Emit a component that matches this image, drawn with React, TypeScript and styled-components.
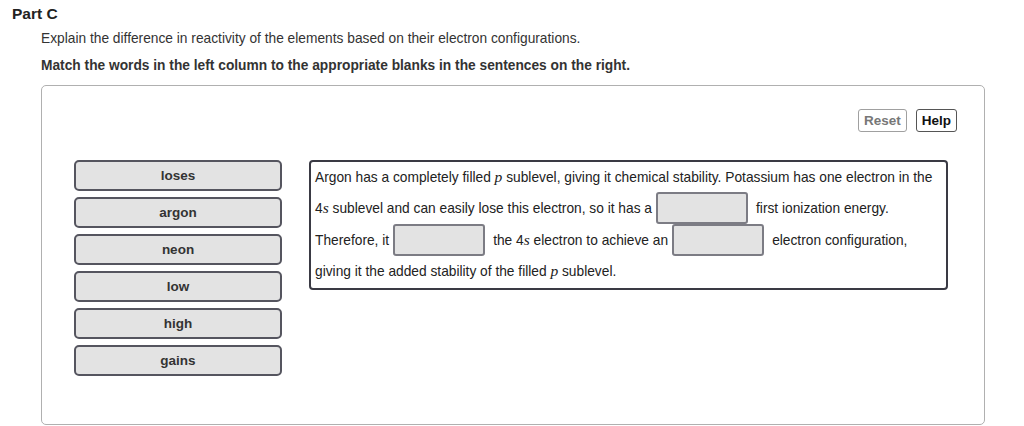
import * as React from "react";
import styled, { createGlobalStyle } from "styled-components";

const GlobalStyle = createGlobalStyle`
    html, body {
        margin: 0;
        padding: 0;
        background: #ffffff;
        font-family: "Liberation Sans", Arial, sans-serif;
        color: #222;
    }
`;

const Page = styled.div`
    width: 1024px;
    height: 426px;
    overflow: hidden;
`;

const PartTitle = styled.h2`
    margin: 0;
    padding: 5px 0 0 12px;
    font-size: 15.5px;
    line-height: 18px;
    font-weight: bold;
    color: #222;
`;

const Body = styled.div`
    padding: 8px 39px 0 41px;
`;

const Prompt = styled.p<{ $bold?: boolean }>`
    margin: 0 0 11px 0;
    font-size: 13.75px;
    line-height: 16px;
    font-weight: ${p => (p.$bold ? "bold" : "normal")};
    color: #333;
`;

const Panel = styled.div`
    margin-top: 4px;
    height: 340px;
    box-sizing: border-box;
    border: 1px solid #b0b0b0;
    border-radius: 5px;
    padding: 23px 27px 0 32px;
`;

const Toolbar = styled.div`
    display: flex;
    justify-content: flex-end;
    gap: 9px;
`;

const ToolButton = styled.button<{ $muted?: boolean }>`
    height: 23px;
    box-sizing: border-box;
    padding: 0 5px;
    border: 1px solid ${p => (p.$muted ? "#a0a0a0" : "#555")};
    border-radius: 3px;
    background: #fff;
    font-family: "Liberation Sans", Arial, sans-serif;
    font-size: 13.5px;
    font-weight: bold;
    color: ${p => (p.$muted ? "#777" : "#111")};
`;

const Content = styled.div`
    display: flex;
    align-items: flex-start;
    gap: 27px;
    margin-top: 28px;
`;

const WordColumn = styled.div`
    display: flex;
    flex-direction: column;
    gap: 6px;
    width: 208px;
`;

const Word = styled.div`
    height: 31px;
    box-sizing: border-box;
    border: 2px solid #55555f;
    border-radius: 5px;
    background: #e3e3e3;
    display: flex;
    align-items: center;
    justify-content: center;
    font-size: 13.5px;
    font-weight: bold;
    color: #333;
`;

const Sentences = styled.div`
    width: 639px;
    box-sizing: border-box;
    border: 2px solid #3a3a44;
    border-radius: 4px;
    padding: 0 4px 2px 4px;
    font-size: 13.75px;
    color: #222;
`;

const Line = styled.div<{ $tall?: boolean }>`
    display: flex;
    align-items: center;
    height: ${p => (p.$tall ? "32px" : "30px")};
    white-space: pre;
`;

const Blank = styled.div`
    width: 92px;
    height: 32px;
    box-sizing: border-box;
    border: 2px solid #7c7c84;
    border-radius: 3px;
    background: #e3e3e3;
    margin: 0 8px 0 4px;
`;

const Var = styled.i`
    font-family: "Liberation Serif", "Times New Roman", serif;
    font-size: 15.5px;
`;

const words = ["loses", "argon", "neon", "low", "high", "gains"];

const App: React.FC = () => {
    return (
        <Page>
            <GlobalStyle />
            <PartTitle>Part C</PartTitle>
            <Body>
                <Prompt>Explain the difference in reactivity of the elements based on their electron configurations.</Prompt>
                <Prompt $bold>Match the words in the left column to the appropriate blanks in the sentences on the right.</Prompt>
                <Panel>
                    <Toolbar>
                        <ToolButton $muted>Reset</ToolButton>
                        <ToolButton>Help</ToolButton>
                    </Toolbar>
                    <Content>
                        <WordColumn>
                            {words.map(w => <Word key={w}>{w}</Word>)}
                        </WordColumn>
                        <Sentences>
                            <Line>Argon has a completely filled <Var>p</Var> sublevel, giving it chemical stability. Potassium has one electron in the</Line>
                            <Line $tall>4<Var>s</Var> sublevel and can easily lose this electron, so it has a<Blank />first ionization energy.</Line>
                            <Line $tall>Therefore, it<Blank />the 4<Var>s</Var> electron to achieve an<Blank />electron configuration,</Line>
                            <Line>giving it the added stability of the filled <Var>p</Var> sublevel.</Line>
                        </Sentences>
                    </Content>
                </Panel>
            </Body>
        </Page>
    );
};

export default App;
